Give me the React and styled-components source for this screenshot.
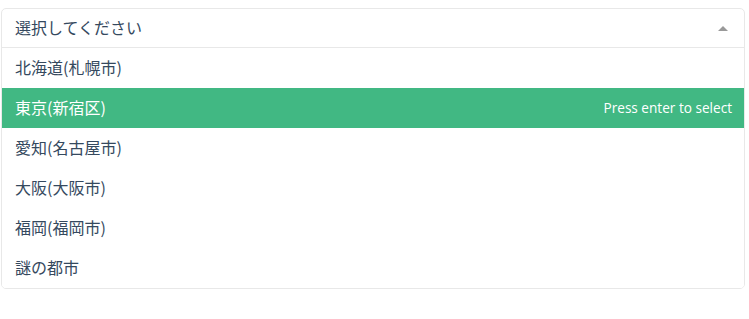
import styled, { createGlobalStyle } from 'styled-components';

const GlobalStyle = createGlobalStyle`
  body {
    margin: 0;
    background: #fff;
    font-family: "Noto Sans CJK JP", "Noto Sans", sans-serif;
  }
`;

const options = ['北海道(札幌市)', '東京(新宿区)', '愛知(名古屋市)', '大阪(大阪市)', '福岡(福岡市)', '謎の都市'];

function App() {
  const selected = 1;
  return (
    <>
      <GlobalStyle />
      <Page>
        <Select>
          <Tags>
            <Placeholder>選択してください</Placeholder>
            <Caret />
          </Tags>
          <List>
            {options.map((opt, i) => (
              <Option key={opt} $active={i === selected}>
                <span>{opt}</span>
                {i === selected && <Hint>Press enter to select</Hint>}
              </Option>
            ))}
          </List>
        </Select>
      </Page>
    </>
  );
}

const Page = styled.div`
  padding: 8px 4px 0 1px;
`;

const Select = styled.div`
  width: 744px;
  box-sizing: border-box;
  border: 1px solid #e8e8e8;
  border-radius: 5px;
  overflow: hidden;
  color: #35495e;
`;

const Tags = styled.div`
  height: 39px;
  box-sizing: border-box;
  border-bottom: 1px solid #e8e8e8;
  display: flex;
  align-items: center;
  justify-content: space-between;
  padding: 0 16px 3px 13px;
`;

const Placeholder = styled.span`
  font-size: 16px;
  line-height: 16px;
`;

const Caret = styled.span`
  width: 0;
  height: 0;
  border-left: 5px solid transparent;
  border-right: 5px solid transparent;
  border-bottom: 5px solid #999;
  margin-top: 4px;
`;

const List = styled.ul`
  list-style: none;
  margin: 0;
  padding: 0;
`;

const Option = styled.li`
  height: 40px;
  box-sizing: border-box;
  display: flex;
  align-items: center;
  justify-content: space-between;
  padding: 0 12px 3px 13px;
  font-size: 16px;
  line-height: 16px;
  background: ${(p) => (p.$active ? '#41b883' : '#fff')};
  color: ${(p) => (p.$active ? '#fff' : '#35495e')};
`;

const Hint = styled.span`
  font-family: "Open Sans", "Noto Sans", sans-serif;
  font-size: 13.6px;
  color: #fff;
  margin-top: 2px;
`;

export default App;
